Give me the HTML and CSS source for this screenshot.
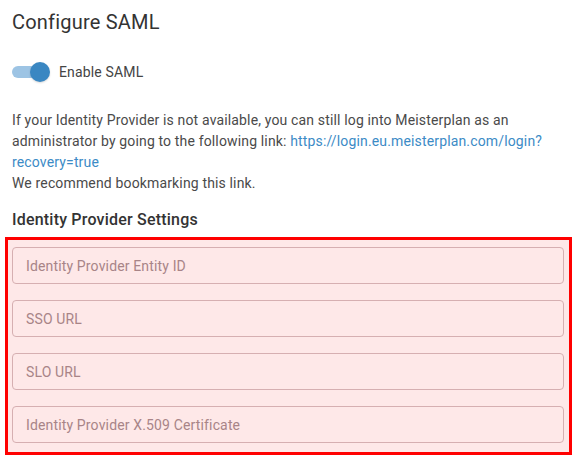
FILE: index.html
```html
<!DOCTYPE html>
<html lang="en">
<head>
<meta charset="utf-8">
<title>Configure SAML</title>
<link rel="stylesheet" href="styles.css">
</head>
<body>
<div class="page">
  <h1 class="title">Configure SAML</h1>
  <label class="toggle-row">
    <span class="toggle"><span class="track"></span><span class="thumb"></span></span>
    <span class="toggle-label">Enable SAML</span>
  </label>
  <p class="info">If your Identity Provider is not available, you can still log into Meisterplan as an administrator by going to the following link: <a class="link" href="#">https://login.eu.meisterplan.com/login?<br>recovery=true</a><br>We recommend bookmarking this link.</p>
  <h2 class="section">Identity Provider Settings</h2>
  <div class="fields">
    <input class="field" type="text" placeholder="Identity Provider Entity ID">
    <input class="field" type="text" placeholder="SSO URL">
    <input class="field" type="text" placeholder="SLO URL">
    <input class="field" type="text" placeholder="Identity Provider X.509 Certificate">
  </div>
</div>
</body>
</html>
```
FILE: styles.css
```css
html, body {
  margin: 0;
  padding: 0;
  background: #ffffff;
}
body {
  font-family: Roboto, "Liberation Sans", sans-serif;
  color: #444444;
  letter-spacing: 0.15px;
}
.page {
  padding: 10px 0 0 12px;
  width: 573px;
  box-sizing: border-box;
}
.title {
  margin: 0;
  font-size: 20px;
  line-height: 24px;
  font-weight: 400;
  color: #333333;
  letter-spacing: 0.2px;
}
.toggle-row {
  display: flex;
  align-items: center;
  height: 20px;
  margin-top: 28px;
}
.toggle {
  position: relative;
  width: 38px;
  height: 20px;
  flex: none;
}
.track {
  position: absolute;
  left: 0;
  top: 4px;
  width: 34px;
  height: 12px;
  border-radius: 6px;
  background: #9dc4e4;
}
.thumb {
  position: absolute;
  left: 18px;
  top: 0;
  width: 20px;
  height: 20px;
  border-radius: 50%;
  background: #3a87c2;
  box-shadow: 0 1px 2px rgba(0,0,0,0.15);
}
.toggle-label {
  margin-left: 9px;
  font-size: 14px;
  line-height: 20px;
  color: #444444;
}
.info {
  margin: 28px 0 0 0;
  font-size: 14px;
  line-height: 21px;
  color: #4a4a4a;
}
.link {
  color: #3c8bc6;
  text-decoration: none;
}
.section {
  margin: 16px 0 0 0;
  font-size: 16px;
  line-height: 20px;
  font-weight: 500;
  color: #333333;
  letter-spacing: 0.2px;
}
.fields {
  margin: 7px 0 0 -7px;
  width: 567px;
  box-sizing: border-box;
  border: 3px solid #ff0000;
  background: #fee8e8;
  padding: 7px 5px 9px 4px;
  display: flex;
  flex-direction: column;
  gap: 16px;
}
.field {
  display: block;
  box-sizing: border-box;
  width: 100%;
  height: 37px;
  margin: 0;
  padding: 0 13px;
  border: 1px solid #d6afb1;
  border-radius: 4px;
  background: #fee8e8;
  font-family: Roboto, "Liberation Sans", sans-serif;
  font-size: 14px;
  letter-spacing: 0.15px;
  color: #444444;
  outline: none;
}
.field::placeholder {
  color: #a88487;
  opacity: 1;
}
```
